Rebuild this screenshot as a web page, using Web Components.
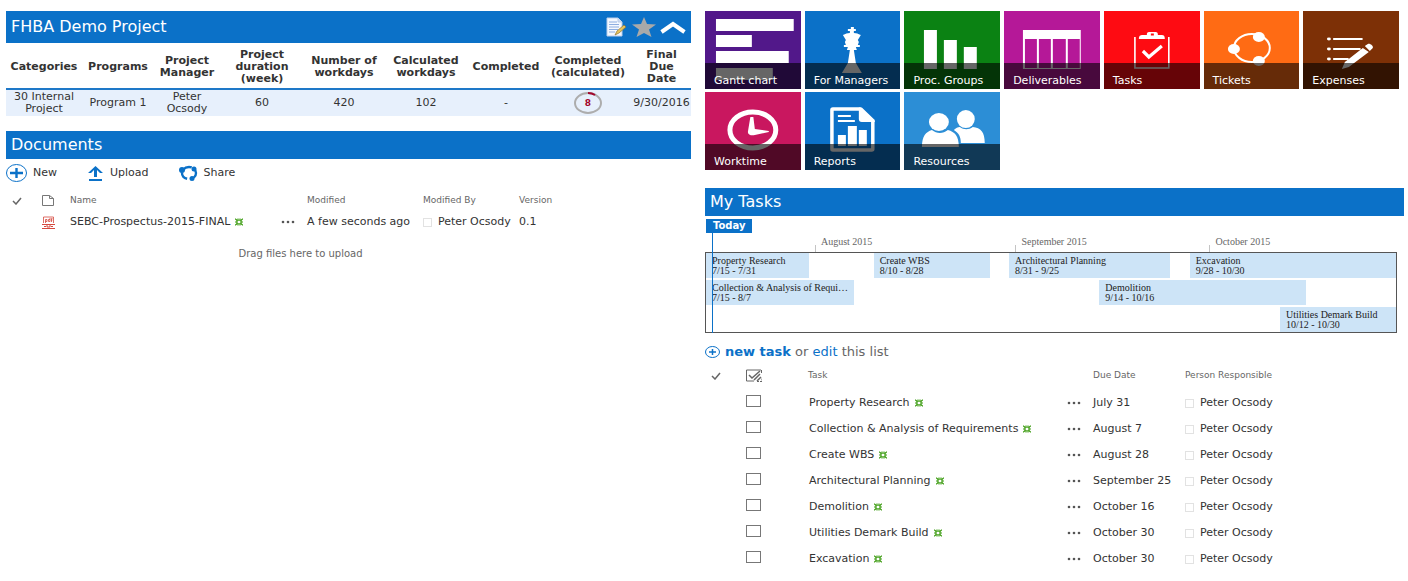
<!DOCTYPE html>
<html lang="en">
<head>
<meta charset="utf-8">
<meta name="viewport" content="width=device-width, initial-scale=1">
<title>FHBA Demo Project</title>
<style>
  body {
    margin: 0;
    background: #fff;
    color: #333;
    font: 11px/12px "DejaVu Sans", Verdana, sans-serif;
    --blue: #0b71c8;
  }
  main {
    display: grid;
    grid-template-columns: minmax(0, 685fr) minmax(0, 699fr);
    gap: 14px;
    padding: 11px 4px 8px 6px;
  }
  .project { --bar-height: 32px; }
  .tiles {
    display: grid;
    grid-template-columns: repeat(7, minmax(0, 1fr));
    gap: 3px 4px;
    margin: 0 5px 18px 0;
  }
</style>
</head>
<body>
<main>
  <div>
    <title-bar class="project">FHBA Demo Project
      <bar-actions slot="actions"></bar-actions>
    </title-bar>
    <project-summary></project-summary>
    <title-bar>Documents</title-bar>
    <doc-library></doc-library>
  </div>
  <div>
    <nav class="tiles" aria-label="Apps">
      <app-tile icon="gantt" color="#52188a">Gantt chart</app-tile>
      <app-tile icon="king" color="#0b71c8">For Managers</app-tile>
      <app-tile icon="bars" color="#0b8213">Proc. Groups</app-tile>
      <app-tile icon="columns" color="#b51898">Deliverables</app-tile>
      <app-tile icon="clipboard" color="#fe0b12">Tasks</app-tile>
      <app-tile icon="ring" color="#ff6b14">Tickets</app-tile>
      <app-tile icon="pencil" color="#7d3006">Expenses</app-tile>
      <app-tile icon="clock" color="#c9175f">Worktime</app-tile>
      <app-tile icon="report" color="#0b71c8">Reports</app-tile>
      <app-tile icon="people" color="#2c8ed6">Resources</app-tile>
    </nav>
    <title-bar>My Tasks</title-bar>
    <task-timeline></task-timeline>
    <task-list></task-list>
  </div>
</main>

<script>
const TILE_ICONS = {
  gantt: `<path d="M11 8h78v12H11zM11 24h36v12H11zM11 40h73v12H11zM11 57h57v12H11z"/>`,
  king: `<path d="M46 16h3v2h2v2h-2v2c3 0 4 1 7 2l-3 5 1 2-1 3h2v2h-4l1 3h-3l2 13 6 10H37l6-10 2-13h-3l1-3h-4v-2h2l-1-3 1-2-3-5c3-1 4-2 7-2v-2h-2v-2h3z"/>`,
  bars: `<path d="M20 19h13v39H20zM40 29h13v29H40zM60 36h13v22H60z"/>`,
  columns: `<path fill-rule="evenodd" d="M19 19h58v39H19zM21 28v29h12V28zM35 28v29h12V28zM49 28v29h13V28zM64 28v29h12V28z"/>`,
  clipboard: `<path d="M31 26v31h34V26" fill="none" stroke="#fff" stroke-width="1.6"/>
    <path fill-rule="evenodd" d="M35 28c0-3 1-4 4-4h4v-1c0-1 1-2 2-2h7c1 0 2 1 2 2v1h4c2 0 3 1 3 4zM47 22.500v2h3v-2z"/>
    <path d="M39 40l6 6 13-11" fill="none" stroke="#fff" stroke-width="3.200"/>`,
  ring: `<ellipse cx="48" cy="37" rx="18" ry="14" fill="none" stroke="#fff" stroke-width="2"/>
    <ellipse cx="55" cy="26" rx="6" ry="5"/><ellipse cx="30" cy="38" rx="6" ry="5"/><ellipse cx="55" cy="50" rx="6" ry="5"/>`,
  pencil: `<path d="M31 28h28M31 38h26M31 48h14" stroke="#fff" stroke-width="2" stroke-linecap="round"/>
    <ellipse cx="26" cy="28" rx="2" ry="1.500"/><ellipse cx="26" cy="38" rx="2" ry="1.500"/><ellipse cx="26" cy="48" rx="2" ry="1.500"/>
    <path d="M39 58l3-7 18-14 6 4-20 15zM62 35l3-2c2-1 6 2 5 4l-3 3z"/>`,
  clock: `<ellipse cx="48" cy="38" rx="23" ry="18" fill="none" stroke="#fff" stroke-width="5"/>
    <path d="M45.500 25h3L50 37l14 2v1l-14 3c-3 1-7 0-7-3z"/>`,
  report: `<path d="M56 17H28c-1 0-1 0-1 1v39c0 1 0 1 1 1h39c1 0 1 0 1-1V29" fill="none" stroke="#fff" stroke-width="3.500"/>
    <path d="M54 15.500h3L70 28v2H57c-2 0-3-1-3-3zM33 23h13v2H33zM33 28h17v2H33zM33 43h8v11h-8zM43 34h9v20h-9zM54 38h8v16h-8z"/>`,
  people: `<ellipse cx="62" cy="27" rx="9" ry="9"/>
    <path d="M50 38c2-2 4-3 6-3 4 3 9 3 13 0 8 1 12 5 12 16H57c0-6-2-10-7-13z"/>
    <ellipse cx="35" cy="30" rx="10" ry="9"/>
    <path d="M18 55c0-11 4-15 10-17 5 4 11 4 16 0 7 2 11 6 11 17z"/>`
};

const TICK = `<svg width="10" height="8" viewBox="0 0 10 8" fill="none" stroke="#666" stroke-width="1.500"><path d="M1 4l3 3 5-6"/></svg>`;
const NEW_BADGE = `<svg class="new" width="8" height="8" viewBox="0 0 8 8" fill="none" stroke="#45a01c" role="img" aria-label="New"><path d="M2 2.200h4v3.600H2z" stroke-width="1.300"/><path d="M0 .7l2 1.500M8 .7L6 2.200M0 7.300l2-1.500M8 7.300L6 5.800M3 .5v1M5 .5v1M3 6.500v1M5 6.500v1M0 4h2M6 4h2" stroke-width="1.200"/></svg>`;
const DOTS = `<svg width="14" height="4" viewBox="0 0 14 4" fill="#555"><circle cx="2" cy="2" r="1.300"/><circle cx="7" cy="2" r="1.300"/><circle cx="12" cy="2" r="1.300"/></svg>`;

const LIST_STYLE = `
  :host { display: block; }
  table { width: 100%; table-layout: fixed; border-collapse: collapse; }
  th, td { padding: 0; text-align: left; white-space: nowrap; }
  th { font-size: 9px; font-weight: normal; color: #666; }
  svg { vertical-align: middle; }
  .new { margin-left: 5px; }
  .tick { padding-left: 6px; }
  a { color: inherit; text-decoration: none; }
  button { padding: 0; border: 0; background: none; font: inherit; color: inherit; }
  .presence {
    display: inline-block;
    width: 7px;
    height: 7px;
    margin-right: 6px;
    border: 1px solid #e2e2e2;
    vertical-align: middle;
  }
`;

class BaseElement extends HTMLElement {
  constructor() {
    super();
    this.attachShadow({ mode: "open" });
  }

  connectedCallback() {
    this.shadowRoot.innerHTML = this.render();
  }
}

class TitleBar extends BaseElement {
  render() {
    return `
      <style>
        :host {
          display: flex;
          align-items: center;
          justify-content: space-between;
          height: var(--bar-height, 28px);
          padding: 0 5px;
          background: var(--blue);
          color: #fff;
        }
        h2 { margin: 0; font-size: 16px; line-height: 20px; font-weight: normal; }
      </style>
      <h2><slot></slot></h2>
      <slot name="actions"></slot>
    `;
  }
}

class BarActions extends BaseElement {
  render() {
    return `
      <style>
        :host { display: flex; align-items: center; gap: 4px; }
        button { display: block; padding: 0; border: 0; background: none; }
        svg { display: block; }
      </style>
      <button aria-label="Edit"><svg width="22" height="20" viewBox="0 0 22 20">
        <path d="M1 1h11l4 4v14H1z" fill="#f4f8ff" stroke="#b9cdea"/>
        <path d="M3 5h8M3 7.500h10M3 10h10M3 12.500h9M3 15h6" stroke="#8eaee0"/>
        <path d="M12 1v4h4" fill="#cfdcf2" stroke="#b9cdea"/>
        <path d="M9 18l2-4 7-6 2 2-7 6z" fill="#e6c35c" stroke="#8d7434" stroke-width=".7"/>
      </svg></button>
      <button aria-label="Favorite"><svg width="24" height="20" viewBox="0 0 24 20"><path d="M12 0l3 7 9 .5-7 5L19.500 20 12 16l-7.500 4L7 12.500 0 7.500 9 7z" fill="#a9a9a9"/></svg></button>
      <button aria-label="Collapse"><svg width="26" height="13" viewBox="0 0 26 13"><path d="M1.500 11L13 3l11.500 8" fill="none" stroke="#fff" stroke-width="4"/></svg></button>
    `;
  }
}

class ProjectSummary extends BaseElement {
  render() {
    return `
      <style>
        :host { display: block; margin-bottom: 15px; }
        table { width: 100%; table-layout: fixed; border-collapse: collapse; }
        th, td { padding: 0; text-align: center; }
        th { height: 46px; padding-top: 3px; box-sizing: border-box; color: #333; }
        thead { border-bottom: 2px solid #1e78c8; }
        td { height: 26px; background: #e7f0fc; }
        svg { display: block; margin: auto; }
        text { font: bold 9px "DejaVu Sans", sans-serif; }
      </style>
      <table>
        <colgroup>
          <col style="width: 76px"><col style="width: 72px"><col style="width: 66px">
          <col style="width: 84px"><col style="width: 80px"><col style="width: 84px">
          <col style="width: 76px"><col style="width: 88px"><col style="width: 59px">
        </colgroup>
        <thead>
          <tr>
            <th>Categories</th><th>Programs</th><th>Project<br>Manager</th>
            <th>Project<br>duration<br>(week)</th><th>Number of<br>workdays</th>
            <th>Calculated<br>workdays</th><th>Completed</th>
            <th>Completed<br>(calculated)</th><th>Final<br>Due<br>Date</th>
          </tr>
        </thead>
        <tbody>
          <tr>
            <td>30 Internal<br>Project</td><td>Program 1</td><td>Peter<br>Ocsody</td>
            <td>60</td><td>420</td><td>102</td><td>-</td>
            <td><svg width="30" height="24" viewBox="0 0 30 24">
              <ellipse cx="15" cy="12" rx="13" ry="10" fill="none" stroke="#adadad" stroke-width="2"/>
              <path d="M15 2q4 0 7 2" fill="none" stroke="#a3062c" stroke-width="2"/>
              <text x="15" y="15" text-anchor="middle" fill="#a3062c">8</text>
            </svg></td>
            <td>9/30/2016</td>
          </tr>
        </tbody>
      </table>
    `;
  }
}

class DocLibrary extends BaseElement {
  render() {
    return `
      <style>
        ${LIST_STYLE}
        .toolbar { display: flex; align-items: center; gap: 30px; height: 28px; }
        .toolbar button { display: flex; align-items: center; gap: 6px; }
        th { height: 26px; }
        td { height: 18px; }
        p { margin: 17px 0 0; padding-right: 96px; text-align: center; font-size: 10px; color: #666; }
      </style>
      <div class="toolbar">
        <button><svg width="21" height="18" viewBox="0 0 21 18" fill="none" stroke="#0b71c8"><ellipse cx="10.500" cy="9" rx="10" ry="8.500"/><path d="M4 9h13M10.500 4v10" stroke-width="2.400"/></svg>New</button>
        <button><svg width="17" height="16" viewBox="0 0 17 16" fill="#0b71c8"><path d="M2 14h13v2H2zM7 12V5L4 8H1l7.500-7L16 8h-3l-3-3v7z"/></svg>Upload</button>
        <button><svg width="19" height="16" viewBox="0 0 19 16"><ellipse cx="10" cy="8" rx="7" ry="6" fill="none" stroke="#0b71c8" stroke-width="2.400" stroke-dasharray="9 3"/><g fill="#0b71c8"><circle cx="3" cy="5" r="3"/><circle cx="15" cy="4" r="2.500"/><circle cx="13" cy="13.500" r="2.500"/></g></svg>Share</button>
      </div>
      <table>
        <colgroup>
          <col style="width: 36px"><col style="width: 28px"><col style="width: 211px">
          <col style="width: 26px"><col style="width: 116px"><col style="width: 96px"><col style="width: 172px">
        </colgroup>
        <thead>
          <tr>
            <th class="tick">${TICK}</th>
            <th><svg width="12" height="11" viewBox="0 0 12 11" fill="none" stroke="#777"><path d="M.5.5h7l4 3v7H.5zM7.500.5v3h4"/></svg></th>
            <th>Name</th><th></th><th>Modified</th><th>Modified By</th><th>Version</th>
          </tr>
        </thead>
        <tbody>
          <tr>
            <td></td>
            <td><svg width="13" height="13" viewBox="0 0 13 13" fill="none" stroke="#d5493f"><path d="M1.500 7V1h10v6" stroke-width=".8"/><path d="M3.500 7V3.500h1.500v2H3.500M8 2v3.500H6.500v-2H8M9.500 6V2.500h1M9 4h1.500" stroke-width=".8"/><path d="M0 8.500h13M0 12.500h13M5 9v2h3V9M2 10.500h2M9 10.500h2"/></svg></td>
            <td><a href="#">SEBC-Prospectus-2015-FINAL</a>${NEW_BADGE}</td>
            <td><button aria-label="Open menu">${DOTS}</button></td>
            <td>A few seconds ago</td>
            <td><span class="presence"></span><a href="#">Peter Ocsody</a></td>
            <td>0.1</td>
          </tr>
        </tbody>
      </table>
      <p>Drag files here to upload</p>
    `;
  }
}

class AppTile extends BaseElement {
  render() {
    return `
      <style>
        :host { display: block; }
        a {
          display: grid;
          grid-template-rows: 52px 26px;
          background: ${this.getAttribute("color")};
          color: #fff;
          text-decoration: none;
        }
        svg { grid-area: 1 / 1 / 3 / 2; width: 100%; height: 78px; fill: #fff; }
        span {
          grid-area: 2 / 1;
          padding: 12px 0 2px 9px;
          background: rgba(0, 0, 0, .6);
          white-space: nowrap;
        }
      </style>
      <a href="#">
        <svg viewBox="0 0 96 78" aria-hidden="true">${TILE_ICONS[this.getAttribute("icon")]}</svg>
        <span><slot></slot></span>
      </a>
    `;
  }
}

// One grid column per day, 7/15 to 10/30. Columns below are 1-based grid lines.
const MONTHS = [["August 2015", 18], ["September 2015", 49], ["October 2015", 79]];
const BARS = [
  ["Property Research", "7/15 - 7/31", 1, 17, 1],
  ["Create WBS", "8/10 - 8/28", 27, 45, 1],
  ["Architectural Planning", "8/31 - 9/25", 48, 73, 1],
  ["Excavation", "9/28 - 10/30", 76, 108, 1],
  ["Collection &amp; Analysis of Requi…", "7/15 - 8/7", 1, 24, 2],
  ["Demolition", "9/14 - 10/16", 62, 94, 2],
  ["Utilities Demark Build", "10/12 - 10/30", 90, 108, 3]
];

class TaskTimeline extends BaseElement {
  render() {
    return `
      <style>
        :host { display: block; position: relative; margin: 3px 7px 11px 0; }
        .today {
          width: max-content;
          margin-left: 1px;
          padding: 1px 7px;
          background: var(--blue);
          color: #fff;
          font-weight: bold;
          font-size: 10px;
          line-height: 12px;
        }
        .line { position: absolute; top: 14px; bottom: 0; left: 7px; width: 1px; background: var(--blue); }
        .months, .bars {
          display: grid;
          grid-template-columns: repeat(107, minmax(0, 1fr));
          font: 10px/10px "Liberation Serif", "Times New Roman", serif;
        }
        .months { height: 19px; color: #666; }
        .months span { grid-row: 1; display: flex; align-items: end; gap: 5px; white-space: nowrap; }
        .months span::before { content: ""; height: 7px; border-left: 1px solid #c4c4c4; }
        .months b { font-weight: normal; margin-bottom: 5px; }
        .bars { grid-template-rows: repeat(3, 25px); gap: 2px 0; border: 1px solid #555; }
        .bars div { padding: 3px 0 2px 6px; background: #cde4f7; color: #222; min-width: 0; }
        .bars span { display: block; white-space: nowrap; }
      </style>
      <div class="today">Today</div>
      <div class="months">
        ${MONTHS.map(([name, col]) => `<span style="grid-column: ${col}"><b>${name}</b></span>`).join("")}
      </div>
      <div class="bars">
        ${BARS.map(([name, dates, from, to, row]) => `
          <div style="grid-area: ${row} / ${from} / auto / ${to}"><span>${name}</span><span>${dates}</span></div>
        `).join("")}
      </div>
      <div class="line"></div>
    `;
  }
}

const TASKS = [
  ["Property Research", "July 31"],
  ["Collection &amp; Analysis of Requirements", "August 7"],
  ["Create WBS", "August 28"],
  ["Architectural Planning", "September 25"],
  ["Demolition", "October 16"],
  ["Utilities Demark Build", "October 30"],
  ["Excavation", "October 30"]
];

class TaskList extends BaseElement {
  render() {
    return `
      <style>
        ${LIST_STYLE}
        .add { display: flex; align-items: center; font-size: 13px; line-height: 16px; color: #666; white-space: pre; }
        .add svg { margin-right: 5px; }
        .add a { color: var(--blue); }
        th { height: 30px; }
        td { height: 26px; }
        th:nth-child(3) { padding-left: 3px; }
        td:nth-child(3) { padding-left: 4px; }
        input {
          appearance: none;
          display: block;
          width: 15px;
          height: 12px;
          margin: 0 0 4px;
          border: 1px solid #777;
          background: #fff;
        }
        input:checked { background: #777; }
      </style>
      <div class="add"><svg width="15" height="12" viewBox="0 0 15 12" fill="none" stroke="#0b71c8"><ellipse cx="7.500" cy="6" rx="7" ry="5.500"/><path d="M4 6h7M7.500 3v6" stroke-width="1.500"/></svg><a href="#"><b>new task</b></a> or <a href="#">edit</a> this list</div>
      <table>
        <colgroup>
          <col style="width: 41px"><col style="width: 59px"><col style="width: 262px">
          <col style="width: 26px"><col style="width: 92px"><col style="width: 219px">
        </colgroup>
        <thead>
          <tr>
            <th class="tick">${TICK}</th>
            <th><svg width="16" height="13" viewBox="0 0 16 13" fill="none" stroke="#666"><path d="M15 1H.5v11H8M15.500 1v3"/><path d="M3 6l3 3 8-7M8 11l6-6M11 12l4-4" stroke-width="1.500"/><path d="M11 12.500h5V9" stroke-dasharray="2 1"/></svg></th>
            <th>Task</th><th></th><th>Due Date</th><th>Person Responsible</th>
          </tr>
        </thead>
        <tbody>
          ${TASKS.map(([name, due]) => `
            <tr>
              <td></td>
              <td><input type="checkbox" aria-label="${name}"></td>
              <td><a href="#">${name}</a>${NEW_BADGE}</td>
              <td><button aria-label="Open menu">${DOTS}</button></td>
              <td>${due}</td>
              <td><span class="presence"></span><a href="#">Peter Ocsody</a></td>
            </tr>
          `).join("")}
        </tbody>
      </table>
    `;
  }
}

customElements.define("title-bar", TitleBar);
customElements.define("bar-actions", BarActions);
customElements.define("project-summary", ProjectSummary);
customElements.define("doc-library", DocLibrary);
customElements.define("app-tile", AppTile);
customElements.define("task-timeline", TaskTimeline);
customElements.define("task-list", TaskList);
</script>
</body>
</html>
